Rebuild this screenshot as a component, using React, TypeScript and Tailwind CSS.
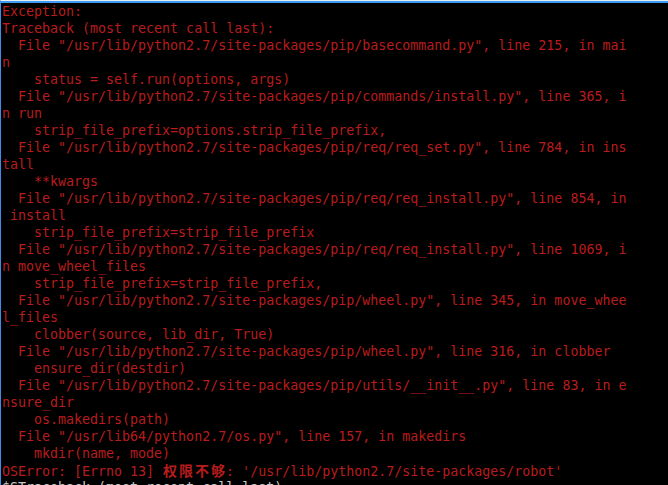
import React from "react";

const lines: string[] = [
  "Exception:",
  "Traceback (most recent call last):",
  '  File "/usr/lib/python2.7/site-packages/pip/basecommand.py", line 215, in mai',
  "n",
  "    status = self.run(options, args)",
  '  File "/usr/lib/python2.7/site-packages/pip/commands/install.py", line 365, i',
  "n run",
  "    strip_file_prefix=options.strip_file_prefix,",
  '  File "/usr/lib/python2.7/site-packages/pip/req/req_set.py", line 784, in ins',
  "tall",
  "    **kwargs",
  '  File "/usr/lib/python2.7/site-packages/pip/req/req_install.py", line 854, in',
  " install",
  "    strip_file_prefix=strip_file_prefix",
  '  File "/usr/lib/python2.7/site-packages/pip/req/req_install.py", line 1069, i',
  "n move_wheel_files",
  "    strip_file_prefix=strip_file_prefix,",
  '  File "/usr/lib/python2.7/site-packages/pip/wheel.py", line 345, in move_whee',
  "l_files",
  "    clobber(source, lib_dir, True)",
  '  File "/usr/lib/python2.7/site-packages/pip/wheel.py", line 316, in clobber',
  "    ensure_dir(destdir)",
  '  File "/usr/lib/python2.7/site-packages/pip/utils/__init__.py", line 83, in e',
  "nsure_dir",
  "    os.makedirs(path)",
  '  File "/usr/lib64/python2.7/os.py", line 157, in makedirs',
  "    mkdir(name, mode)",
];

const cjk = ["权", "限", "不", "够"];

export default function App() {
  return (
    <div
      className="w-[668px] h-[485px] overflow-hidden bg-[#000000] border-t border-t-[#e8eef5] border-l border-l-[#3d8ee6]"
    >
      <div className="h-[2px] bg-[#3d9bf0]" />
      <div
        className="pl-px text-[13.3px] leading-[17px] text-[#b81c1c] whitespace-pre"
        style={{ fontFamily: '"DejaVu Sans Mono", "Liberation Mono", monospace' }}
      >
        {lines.map((l, i) => (
          <div key={i} className="h-[17px]">
            {l}
          </div>
        ))}
        <div className="h-[17px]">
          {"OSError: [Errno 13] "}
          {cjk.map((c) => (
            <span
              key={c}
              className="inline-block w-4 text-center font-bold text-[14px]"
              style={{ fontFamily: '"Noto Sans CJK SC", sans-serif' }}
            >
              {c}
            </span>
          ))}
          {": '/usr/lib/python2.7/site-packages/robot'"}
        </div>
        <div className="h-[17px] text-[#c8c8c8]">$STraceback (most recent call last):</div>
      </div>
    </div>
  );
}
